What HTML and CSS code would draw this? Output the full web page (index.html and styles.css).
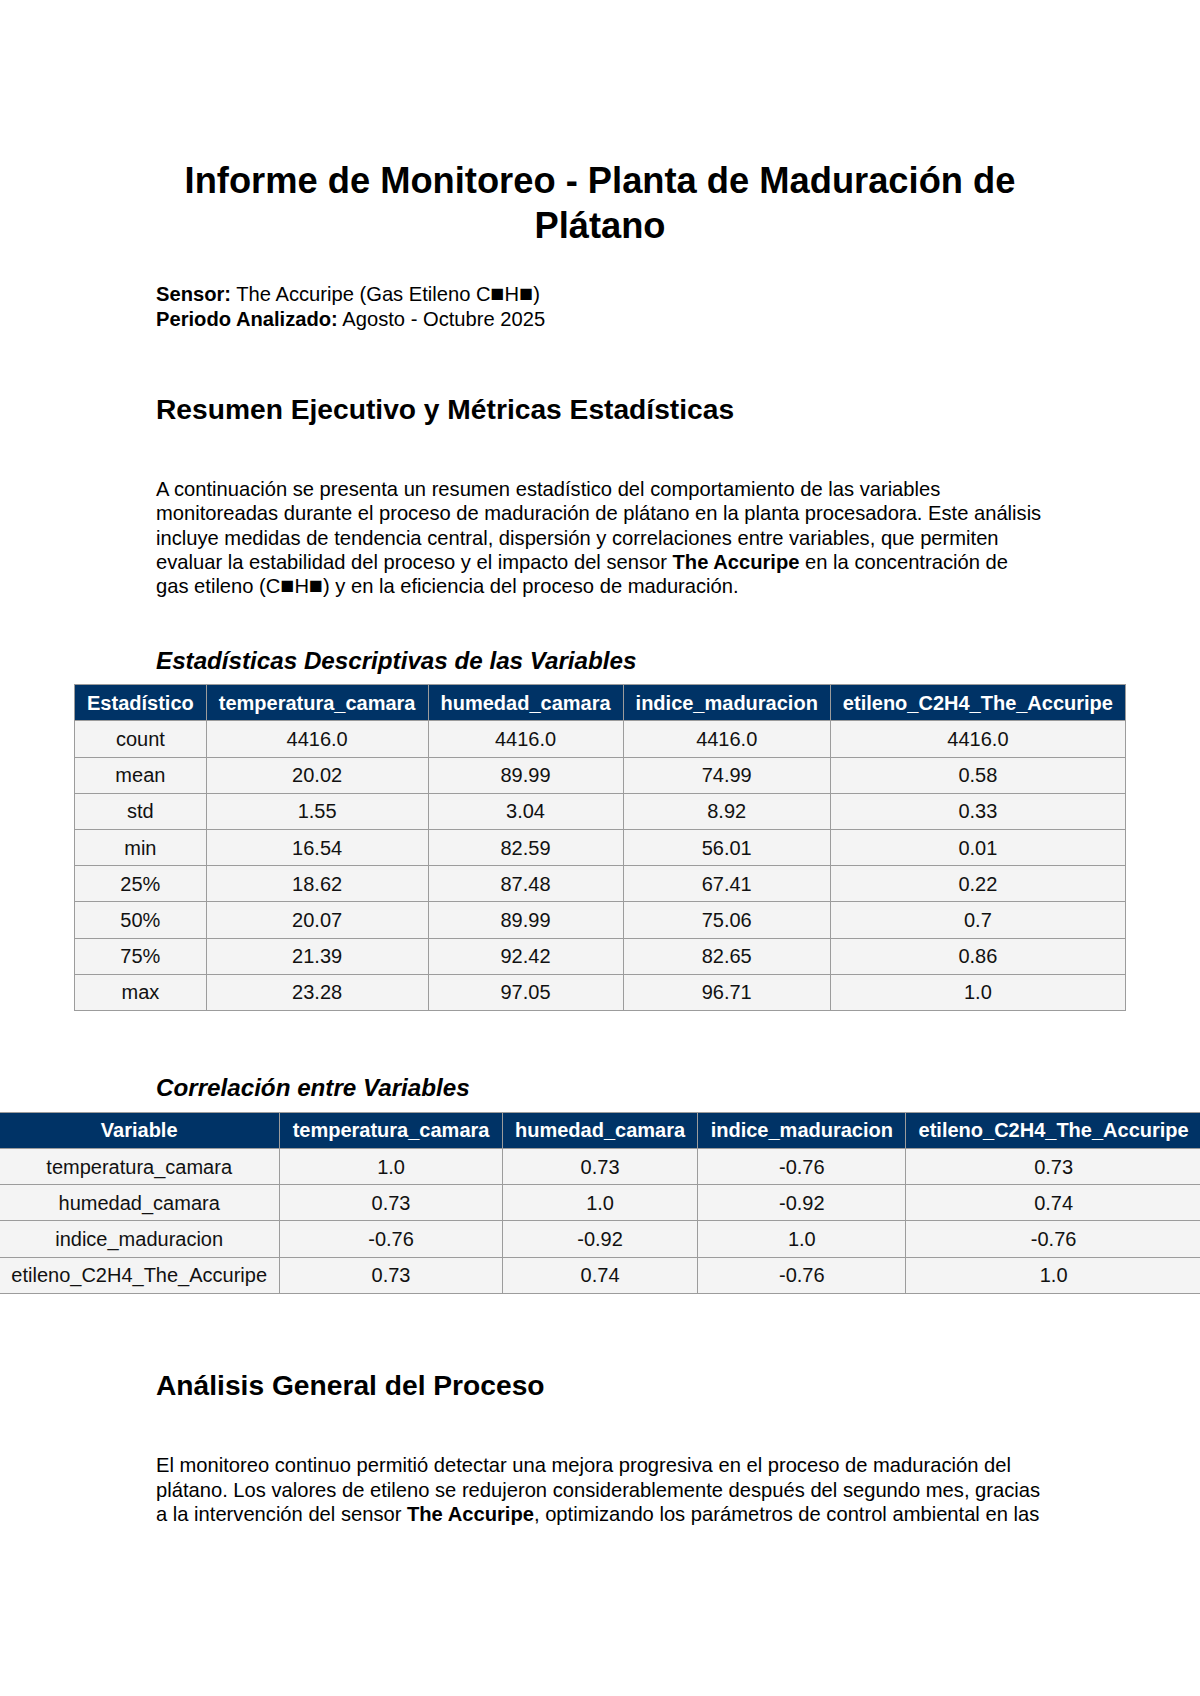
FILE: index.html
```html
<!DOCTYPE html>
<html lang="es">
<head>
<meta charset="utf-8">
<title>Informe de Monitoreo - Planta de Maduración de Plátano</title>
<link rel="stylesheet" href="styles.css">
</head>
<body>
<main class="page">
  <h1 class="title">Informe de Monitoreo - Planta de Maduración de Plátano</h1>

  <div class="meta">
    <div><strong>Sensor:</strong> The Accuripe (Gas Etileno C<span class="box">■</span>H<span class="box">■</span>)</div>
    <div><strong>Periodo Analizado:</strong> Agosto - Octubre 2025</div>
  </div>

  <h2 class="section section-first">Resumen Ejecutivo y Métricas Estadísticas</h2>

  <p class="text text-first">A continuación se presenta un resumen estadístico del comportamiento de las variables monitoreadas durante el proceso de maduración de plátano en la planta procesadora. Este análisis incluye medidas de tendencia central, dispersión y correlaciones entre variables, que permiten evaluar la estabilidad del proceso y el impacto del sensor <strong>The Accuripe</strong> en la concentración de gas etileno (C<span class="box">■</span>H<span class="box">■</span>) y en la eficiencia del proceso de maduración.</p>

  <h3 class="sub sub-first">Estadísticas Descriptivas de las Variables</h3>

  <div class="table-wrap wrap-first">
    <table class="data">
      <thead>
        <tr><th>Estadístico</th><th>temperatura_camara</th><th>humedad_camara</th><th>indice_maduracion</th><th>etileno_C2H4_The_Accuripe</th></tr>
      </thead>
      <tbody>
        <tr><td>count</td><td>4416.0</td><td>4416.0</td><td>4416.0</td><td>4416.0</td></tr>
        <tr><td>mean</td><td>20.02</td><td>89.99</td><td>74.99</td><td>0.58</td></tr>
        <tr><td>std</td><td>1.55</td><td>3.04</td><td>8.92</td><td>0.33</td></tr>
        <tr><td>min</td><td>16.54</td><td>82.59</td><td>56.01</td><td>0.01</td></tr>
        <tr><td>25%</td><td>18.62</td><td>87.48</td><td>67.41</td><td>0.22</td></tr>
        <tr><td>50%</td><td>20.07</td><td>89.99</td><td>75.06</td><td>0.7</td></tr>
        <tr><td>75%</td><td>21.39</td><td>92.42</td><td>82.65</td><td>0.86</td></tr>
        <tr><td>max</td><td>23.28</td><td>97.05</td><td>96.71</td><td>1.0</td></tr>
      </tbody>
    </table>
  </div>

  <h3 class="sub sub-second">Correlación entre Variables</h3>

  <div class="table-wrap wrap-second">
    <table class="data data-wide">
      <thead>
        <tr><th>Variable</th><th>temperatura_camara</th><th>humedad_camara</th><th>indice_maduracion</th><th>etileno_C2H4_The_Accuripe</th></tr>
      </thead>
      <tbody>
        <tr><td>temperatura_camara</td><td>1.0</td><td>0.73</td><td>-0.76</td><td>0.73</td></tr>
        <tr><td>humedad_camara</td><td>0.73</td><td>1.0</td><td>-0.92</td><td>0.74</td></tr>
        <tr><td>indice_maduracion</td><td>-0.76</td><td>-0.92</td><td>1.0</td><td>-0.76</td></tr>
        <tr><td>etileno_C2H4_The_Accuripe</td><td>0.73</td><td>0.74</td><td>-0.76</td><td>1.0</td></tr>
      </tbody>
    </table>
  </div>

  <h2 class="section section-second">Análisis General del Proceso</h2>

  <p class="text text-second">El monitoreo continuo permitió detectar una mejora progresiva en el proceso de maduración del plátano. Los valores de etileno se redujeron considerablemente después del segundo mes, gracias a la intervención del sensor <strong>The Accuripe</strong>, optimizando los parámetros de control ambiental en las</p>
</main>
</body>
</html>
```

FILE: styles.css
```css
html, body {
  margin: 0;
  padding: 0;
  background: #ffffff;
}

body {
  font-family: "Liberation Sans", Arial, Helvetica, sans-serif;
  color: #000000;
  overflow: hidden;
}

.page {
  width: 1200px;
  height: 1696px;
  padding: 158px 156px 0 156px;
  box-sizing: border-box;
  overflow: hidden;
}

.title {
  margin: 0;
  font-size: 36.3px;
  line-height: 45.4px;
  font-weight: bold;
  text-align: center;
}

.meta {
  margin-top: 33.4px;
  font-size: 20.16px;
  line-height: 24.6px;
}

.meta strong {
  font-weight: bold;
}

.box {
  font-size: 1.15em;
  line-height: 0;
}

.section {
  margin: 0;
  font-size: 28.2px;
  line-height: 33.8px;
  font-weight: bold;
}

.section-first {
  margin-top: 62px;
}

.section-second {
  margin-top: 74.8px;
}

.text {
  margin: 0;
  font-size: 20.16px;
  line-height: 24.2px;
}

.text-first {
  margin-top: 50px;
}

.text-second {
  margin-top: 51px;
}

.sub {
  margin: 0;
  font-size: 24.2px;
  line-height: 29px;
  font-weight: bold;
  font-style: italic;
}

.sub-first {
  margin-top: 47.5px;
}

.sub-second {
  margin-top: 62px;
}

.table-wrap {
  display: flex;
  justify-content: center;
  margin-left: -156px;
  margin-right: -156px;
}

.wrap-first {
  margin-top: 9.5px;
}

.wrap-second {
  margin-top: 10px;
}

.data {
  flex-shrink: 0;
  border-collapse: collapse;
  font-size: 20px;
  line-height: 24px;
}

.data th,
.data td {
  border: 1px solid #9c9c9c;
  padding-top: 5.6px;
  padding-bottom: 5.6px;
  text-align: center;
  white-space: nowrap;
}

.data:not(.data-wide) th,
.data:not(.data-wide) td {
  padding-left: 12px;
  padding-right: 12px;
}

.data-wide th,
.data-wide td {
  padding-left: 12.3px;
  padding-right: 12.3px;
}

.data th {
  background: #003366;
  color: #ffffff;
  font-weight: bold;
}

.data td {
  background: #f4f4f4;
  color: #111111;
  font-weight: normal;
}
```
